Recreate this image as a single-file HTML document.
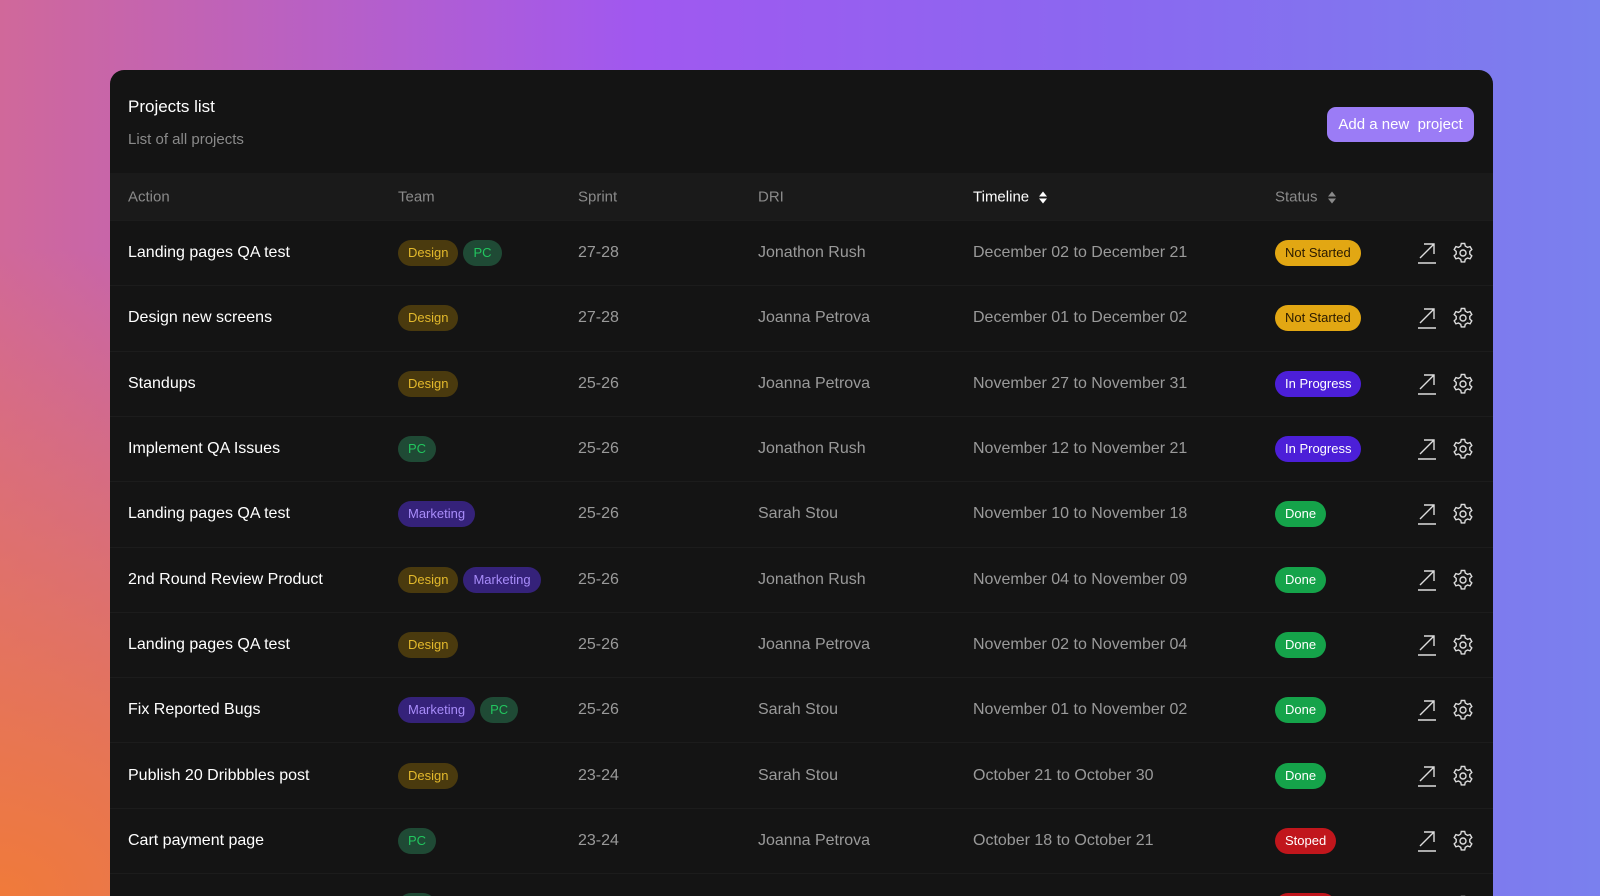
<!DOCTYPE html>
<html><head><style>
*{margin:0;padding:0;box-sizing:border-box}
html{width:1600px;height:896px;overflow:hidden}
body{width:1600px;height:896px;overflow:hidden;font-family:"Liberation Sans",sans-serif;
background:radial-gradient(ellipse 900px 650px at 0% 100%,#f07a3a 0%,rgba(240,122,58,0) 100%),linear-gradient(90deg,#d0689a 0%,#a058f0 40%,#8a68f0 70%,#7a80ee 100%);position:relative}
.card{position:absolute;left:110px;top:70px;width:1383px;height:826px;background:#141414;border-radius:14px 14px 0 0;overflow:hidden}
.t{position:absolute;left:18px;top:27px;color:#fff;font-size:17px}
.s{position:absolute;left:18px;top:61px;color:#8a8a8a;font-size:15px}
.btn{position:absolute;left:1217px;top:37px;width:147px;height:35px;background:#9b7cf6;border-radius:9px;color:#fff;font-size:15px;line-height:35px;text-align:center}
.hd{position:absolute;left:0;top:103px;width:100%;height:47px;background:#1a1a1a;color:#8a8a8a;font-size:15px}
.hd span,.r span{position:absolute;top:50%;transform:translateY(-50%);white-space:nowrap}
.r{position:absolute;left:0;width:100%;height:65.3px;border-top:1px solid #1c1c1c;font-size:16px;color:#9a9a9a}
.a{left:18px;color:#fff}
.b{display:inline-block;height:26px;line-height:26px;padding:0 10px;border-radius:13px;font-size:13px;margin-right:5px;font-style:normal}
.D{background:#4a3a0e;color:#e3b92c}.P{background:#1f4a35;color:#22c55e}.M{background:#35227a;color:#a88cfa}
.NS{background:#e2a713;color:#2a1a00}.IP{background:#4c1fd8;color:#fff}.DN{background:#15a34a;color:#fff}.ST{background:#c1161c;color:#fff}
svg{position:absolute;top:50%;transform:translateY(-50%)}
.so{display:inline-block;vertical-align:middle;margin-left:10px}
</style></head><body>
<div class="card">
<div class="t">Projects list</div>
<div class="s">List of all projects</div>
<div class="btn">Add a new&nbsp; project</div>
<div class="hd">
<span style="left:18px">Action</span><span style="left:288px">Team</span><span style="left:468px">Sprint</span><span style="left:648px">DRI</span>
<span style="left:863px;color:#fff">Timeline<svg class="so" style="position:static;transform:none" width="8" height="12" viewBox="0 0 8 12"><path d="M4 0L8 5H0zM4 12L0 7H8z" fill="#fff"/></svg></span>
<span style="left:1165px">Status<svg class="so" style="position:static;transform:none" width="8" height="12" viewBox="0 0 8 12"><path d="M4 0L8 5H0zM4 12L0 7H8z" fill="#8a8a8a"/></svg></span>
</div>
<div id="rows"></div>
</div>
<script>
var d=[["Landing pages QA test",[["D","Design"],["P","PC"]],"27-28","Jonathon Rush","December 02 to December 21",["NS","Not Started"]],
["Design new screens",[["D","Design"]],"27-28","Joanna Petrova","December 01 to December 02",["NS","Not Started"]],
["Standups",[["D","Design"]],"25-26","Joanna Petrova","November 27 to November 31",["IP","In Progress"]],
["Implement QA Issues",[["P","PC"]],"25-26","Jonathon Rush","November 12 to November 21",["IP","In Progress"]],
["Landing pages QA test",[["M","Marketing"]],"25-26","Sarah Stou","November 10 to November 18",["DN","Done"]],
["2nd Round Review Product",[["D","Design"],["M","Marketing"]],"25-26","Jonathon Rush","November 04 to November 09",["DN","Done"]],
["Landing pages QA test",[["D","Design"]],"25-26","Joanna Petrova","November 02 to November 04",["DN","Done"]],
["Fix Reported Bugs",[["M","Marketing"],["P","PC"]],"25-26","Sarah Stou","November 01 to November 02",["DN","Done"]],
["Publish 20 Dribbbles post",[["D","Design"]],"23-24","Sarah Stou","October 21 to October 30",["DN","Done"]],
["Cart payment page",[["P","PC"]],"23-24","Joanna Petrova","October 18 to October 21",["ST","Stoped"]],
["Cart payment page",[["P","PC"]],"23-24","Joanna Petrova","October 18 to October 21",["ST","Stoped"]]];
var h="";
var ic='<svg style="left:1307px" width="20" height="22" viewBox="0 0 20 22" fill="none" stroke="#ddd" stroke-width="1.4"><path d="M3 16L17 2M7 2H17V12M1 21H19"/></svg><svg style="left:1341px" width="24" height="24" viewBox="0 0 24 24" fill="none" stroke="#ddd" stroke-width="1.4"><circle cx="12" cy="12" r="3"/><path d="M10.3 2.5h3.4l.6 2.6 2.2 1.3 2.6-.8 1.7 2.9-2 1.9v2.6l2 1.9-1.7 2.9-2.6-.8-2.2 1.3-.6 2.6h-3.4l-.6-2.6-2.2-1.3-2.6.8-1.7-2.9 2-1.9v-2.6l-2-1.9 1.7-2.9 2.6.8 2.2-1.3z"/></svg>';
d.forEach(function(r,i){h+='<div class="r" style="top:'+(150+i*65.3)+'px"><span class="a">'+r[0]+'</span><span style="left:288px">'+r[1].map(function(b){return '<i class="b '+b[0]+'">'+b[1]+'</i>'}).join("")+'</span><span style="left:468px">'+r[2]+'</span><span style="left:648px">'+r[3]+'</span><span style="left:863px">'+r[4]+'</span><span style="left:1165px"><i class="b '+r[5][0]+'">'+r[5][1]+'</i></span>'+ic+'</div>'});
document.getElementById("rows").innerHTML=h;
</script>
</body></html>
